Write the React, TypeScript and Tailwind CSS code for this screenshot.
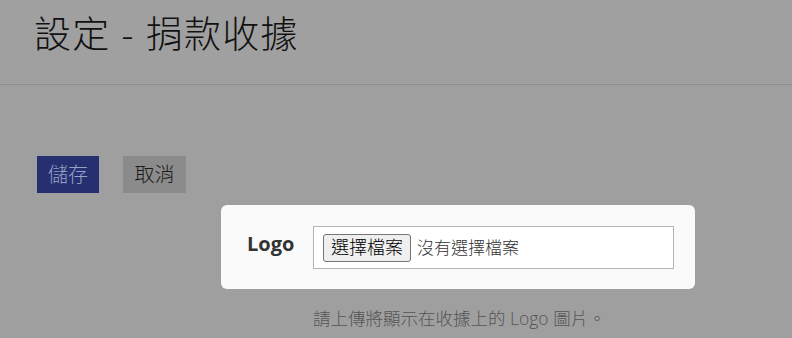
import React from "react";

const font = "font-['Open_Sans','Noto_Sans_CJK_TC',sans-serif]";

export default function App() {
  return (
    <div className={`min-h-[338px] w-full bg-[#9f9f9f] ${font}`}>
      {/* page header */}
      <div className="h-[85px] border-b border-[#8e8e8e] bg-[#a0a0a0] pl-[34px] pt-[14px]">
        <h1 className="text-[37px] leading-[40px] font-light text-[#111] tracking-[1.3px]">
          設定 - 捐款收據
        </h1>
      </div>

      {/* actions */}
      <div className="flex gap-[24px] pl-[37px] pt-[71px]">
        <button className="h-[37px] w-[62px] bg-[#263070] text-[20px] font-light leading-none text-[#98a1c6]">
          儲存
        </button>
        <button className="h-[37px] w-[63px] bg-[#8b8b8b] text-[20px] font-light leading-none text-[#1a1a1a]">
          取消
        </button>
      </div>

      {/* highlighted field */}
      <div className="ml-[221px] mt-[12px] flex h-[84px] w-[474px] rounded-[6px] bg-[#fafafa] pl-[26px] pt-[21px]">
        <div className="w-[66px] pt-[3px] text-[20px] font-bold leading-[30px] text-[#333]">
          Logo
        </div>
        <div className="flex h-[43px] w-[361px] items-center border border-[#b4b4b4] bg-white pl-[9px]">
          <span className="flex h-[28px] w-[88px] items-center justify-center rounded-[3px] border border-[#767676] bg-[#efefef] text-[18px] font-light text-black">
            選擇檔案
          </span>
          <span className="ml-[6px] text-[17px] font-light text-[#333]">沒有選擇檔案</span>
        </div>
      </div>

      <p className="ml-[313px] mt-[17px] text-[17.5px] leading-[24px] font-light text-[#555]">
        請上傳將顯示在收據上的 Logo 圖片。
      </p>
    </div>
  );
}
